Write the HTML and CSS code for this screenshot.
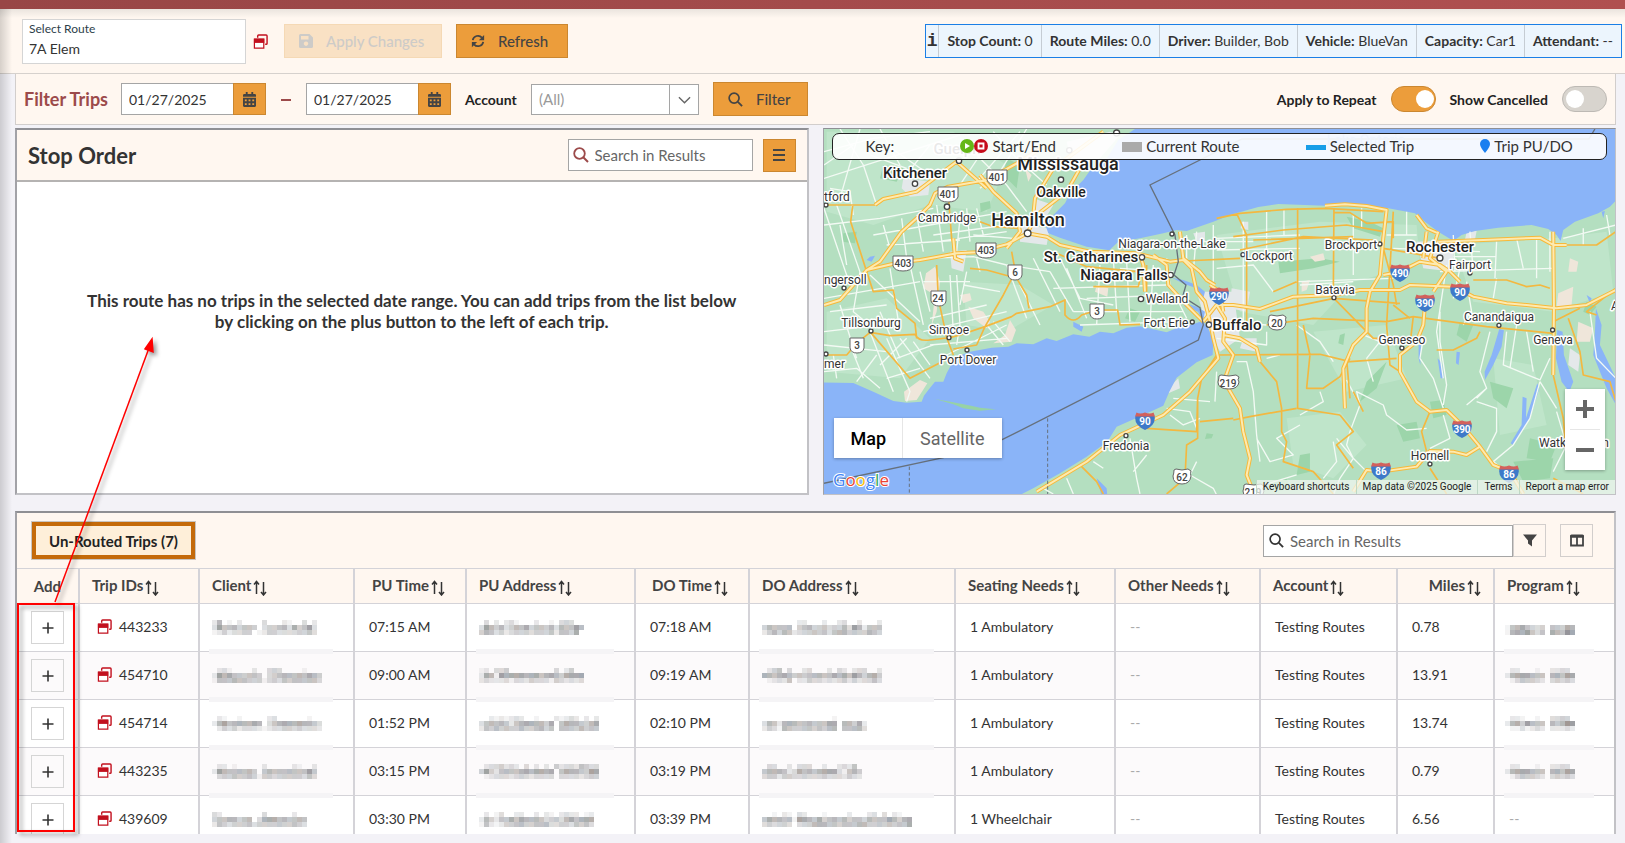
FILE: index.html
```html
<!DOCTYPE html>
<html lang="en">
<head>
   <meta charset="utf-8">
   <title>Route Trips</title>
   <link rel="stylesheet" href="styles.css">
   <script src="mosaic.js" defer></script>
</head>
<body>
   <svg class="defs" width="0" height="0" aria-hidden="true">
      <symbol id="i-copy" viewBox="0 0 16 16"><path d="M5 4V2Q5 1 6 1H14Q15 1 15 2V10Q15 11 14 11H13" fill="none" stroke="currentColor" stroke-width="1.500"/><path d="M1.500 5.500h10v9.500h-10z" fill="#fff" stroke="currentColor" stroke-width="1.300"/><path d="M1 5h11v4.500H1z" fill="currentColor"/></symbol>
      <symbol id="i-save" viewBox="0 0 14 14"><path fill="currentColor" fill-rule="evenodd" d="M1.500 0H10.500L14 3.500V12.500Q14 14 12.500 14H1.500Q0 14 0 12.500V1.500Q0 0 1.500 0zM2 2V5.500H9.500V2zM7 7.500a2.200 2.200 0 1 0 .01 0z"/></symbol>
      <symbol id="i-refresh" viewBox="0 0 16 16"><path d="M2 7A6 6 0 0 1 12.500 4.200M14 9A6 6 0 0 1 3.500 11.800" fill="none" stroke="currentColor" stroke-width="2"/><path d="M15 1V7H9zM1 15V9H7z" fill="currentColor"/></symbol>
      <symbol id="i-cal" viewBox="0 0 14 16"><path fill="currentColor" fill-rule="evenodd" d="M3 0H5V2H9V0H11V2H13L14 3V5H0V3L1 2H3zM0 6H14V15L13 16H1L0 15zM2 8V10H4V8zM6 8V10H8V8zM10 8V10H12V8zM2 12V14H4V12zM6 12V14H8V12zM10 12V14H12V12z"/></symbol>
      <symbol id="i-search" viewBox="0 0 16 16"><path d="M10.500 10.500L15 15" stroke="currentColor" stroke-width="2"/><circle cx="6.500" cy="6.500" r="5.300" fill="none" stroke="currentColor" stroke-width="1.800"/></symbol>
      <symbol id="i-sort" viewBox="0 0 14 16"><path d="M3.500 14V2M1 4.500L3.500 1.500L6 4.500M10.500 2V15M8 12L10.500 15L13 12" fill="none" stroke="currentColor" stroke-width="1.500"/></symbol>
      <symbol id="i-plus" viewBox="0 0 12 12"><path d="M6 .5V11.500M.5 6H11.500" stroke="currentColor" stroke-width="1.600"/></symbol>
      <symbol id="interstate" viewBox="-11 -9 22 18"><path d="M-9.500-5Q-11.500 4 0 9Q11.500 4 9.500-5z" fill="#3d79c9"/><path d="M-10-4.500L-8.500-8.500Q-5-6.500 0-8.500Q5-6.500 8.500-8.500L10-4.500z" fill="#d3605c"/></symbol>
   </svg>

   <div class="topbar"></div>

   <header class="header">
      <div class="route">
         <label for="route">Select Route</label>
         <input id="route" type="text" value="7A Elem">
      </div>
      <a class="copy" href="#" aria-label="Open route"><svg><use href="#i-copy"/></svg></a>
      <button class="btn wide" disabled><svg class="ic"><use href="#i-save"/></svg>Apply Changes</button>
      <button class="btn refresh"><svg class="ic"><use href="#i-refresh"/></svg>Refresh</button>
      <ul class="info">
         <li class="i">i</li>
         <li><b>Stop Count:</b> 0</li>
         <li><b>Route Miles:</b> 0.0</li>
         <li><b>Driver:</b> Builder, Bob</li>
         <li><b>Vehicle:</b> BlueVan</li>
         <li><b>Capacity:</b> Car1</li>
         <li><b>Attendant:</b> --</li>
      </ul>
   </header>

   <main>
      <form class="filter" onsubmit="return false">
         <h2>Filter Trips</h2>
         <div class="date">
            <input type="text" value="01/27/2025" aria-label="From date"><button type="button" aria-label="Pick from date"><svg><use href="#i-cal"/></svg></button>
         </div>
         <span class="dash"></span>
         <div class="date">
            <input type="text" value="01/27/2025" aria-label="To date"><button type="button" aria-label="Pick to date"><svg><use href="#i-cal"/></svg></button>
         </div>
         <label class="account" for="account">Account</label>
         <div class="select">
            <select id="account"><option>(All)</option></select>
            <svg viewBox="0 0 14 8"><path d="M1 1L7 7L13 1" fill="none" stroke="#666" stroke-width="1.500"/></svg>
         </div>
         <button class="btn go"><svg class="ic"><use href="#i-search"/></svg>Filter</button>
         <label class="toggle first">Apply to Repeat <input type="checkbox" checked></label>
         <label class="toggle">Show Cancelled <input type="checkbox"></label>
      </form>

      <div class="panels">
         <section class="panel stops">
            <div class="head">
               <h1>Stop Order</h1>
               <div class="search"><svg><use href="#i-search"/></svg><input type="text" placeholder="Search in Results" aria-label="Search stops"></div>
               <button class="menu" aria-label="Menu"><svg viewBox="0 0 12 12"><path d="M0 1H12M0 6H12M0 11H12" stroke="#444" stroke-width="1.800"/></svg></button>
            </div>
            <p>This route has no trips in the selected date range. You can add trips from the list below<br>by clicking on the plus button to the left of each trip.</p>
         </section>

         <section class="panel map">
            <svg class="canvas" viewBox="0 0 792 365" preserveAspectRatio="xMinYMin slice">
               <g transform="translate(-4 -4) scale(.3333)">
                  <path d="M0 0H2400V1120H0z" fill="#b4dfc0"/>
                  <!-- farmland and forest -->
                  <g fill="#bfe5ca">
                     <path d="M20 20L400 20L560 120L500 260L330 240L160 300L20 260zM20 560L200 520L330 640L240 760L20 740zM430 470L600 480L700 540L560 620L440 600z"/>
                     <path d="M1190 330L1500 290L1790 300L1800 420L1600 470L1480 600L1260 560zM1900 360L2200 340L2360 320L2380 500L2200 560L1960 530zM1480 620L1700 600L1760 760L1580 800z"/>
                     <path d="M1400 880L1560 860L1640 960L1540 1060L1420 1020zM2020 700L2140 720L2180 900L2040 930z"/>
                  </g>
                  <g fill="#9cd5aa">
                     <path d="M190 120L250 130L230 170L180 160zM560 100L600 120L590 190L550 150zM480 235L510 228L512 250L482 262zM70 325L110 320L105 355L66 350zM930 550L960 560L945 590L915 580zM1160 925L1180 928L1175 940L1155 942z"/>
                     <path d="M1375 410L1500 400L1560 410L1480 430L1380 445zM1580 275L1650 290L1690 310L1680 335L1600 310zM1700 710L1670 790L1620 830L1640 770zM1920 590L1960 600L1940 650L1910 630zM2010 770L2080 790L2060 850L2020 820zM2130 940L2210 960L2190 1010L2120 1000zM1350 1070L1400 1060L1410 1090L1370 1100zM1560 630L1575 625L1570 660L1555 655zM2080 1010L2200 1000L2190 1060L2110 1070z"/>
                     <path d="M1440 990L1470 985L1470 1040L1430 1050zM1830 830L1870 825L1880 870L1840 880zM1730 900L1790 890L1800 940L1750 950zM2300 530L2330 545L2310 570L2290 560z"/>
                  </g>
                  <g fill="#efe6da">
                     <path d="M318 445L345 425L360 470L350 560L335 600L345 510L310 490zM300 765L322 775L290 825L255 828L252 800zM420 510L450 505L455 525L430 535zM445 545L490 560L510 590L500 610L460 580zM570 585L588 615L575 650L520 655L555 630zM830 480L865 490L862 515L825 500zM615 130L635 150L625 170z"/>
                     <path d="M1470 395L1510 385L1515 405L1485 410zM1445 470L1470 465L1460 495L1445 500zM2250 400L2275 410L2270 440L2245 440zM2215 505L2260 485L2255 540L2210 545zM2275 590L2320 610L2310 650L2270 650z"/>
                  </g>
                  <g fill="#e4e8ea">
                     <path d="M250 160L330 170L325 210L270 215L245 190zM600 300L690 310L680 360L600 350zM640 220L700 240L670 290L640 280zM740 50L870 20L900 30L840 100L760 130zM390 380L440 375L430 440L395 430zM1130 500L1240 500L1260 640L1200 680L1160 600zM1235 490L1290 500L1280 560L1230 550zM1790 350L1900 345L1900 440L1810 430zM1265 290L1285 290L1285 315L1262 310zM1120 325L1155 320L1155 350L1130 350zM1270 640L1310 640L1310 680L1260 670zM1045 790L1075 760L1080 790L1045 805zM2250 670L2280 690L2275 740L2245 720zM1940 320L1970 318L1965 345L1935 345z"/>
                  </g>
                  <!-- lakes -->
                  <g fill="#8ab4f8">
                     <path d="M945 12L895 45L862 98L815 130L790 165L750 205L735 235L695 275L676 300L685 325L720 338L800 365L868 376L895 350L960 340L1030 325L1070 315L1100 318L1180 290L1240 267L1315 246L1375 237L1515 242L1585 243L1705 250L1785 265L1815 290L1855 320L1885 338L1900 348L1925 330L1965 318L2035 308L2135 300L2185 312L2210 330L2222 348L2230 315L2265 290L2335 265L2370 245L2400 215V0H960z"/>
                     <path d="M0 772L100 774L160 800L220 828L260 833L305 830L312 812L325 795L345 770L370 770L380 745L392 722L410 695L450 680L515 668L565 665L590 655L640 658L680 640L710 648L760 628L808 635L840 620L880 625L920 608L960 604L1010 615L1040 622L1080 605L1110 600L1148 588L1165 610L1180 650L1178 690L1130 712L1100 735L1070 758L1048 800L1030 842L970 870L890 905L862 950L800 995L720 1045L640 1090L590 1115H0z"/>
                     <path d="M1055 458L1090 465L1130 480L1155 500L1150 520L1130 490L1095 478zM1085 530L1130 545L1155 560L1148 590L1135 560L1095 545z"/>
                     <path d="M2038 612L2052 616L2045 665L2020 720L1995 765L1994 740L2015 690zM2212 615L2228 620L2232 690L2260 770L2248 800L2225 770L2208 700zM2328 550L2345 600L2340 660L2388 760V840L2360 790L2320 690L2325 620zM2152 775L2158 790L2130 880L2080 960L2072 955L2105 900L2108 815L2120 820L2118 880zM1796 650L1803 655L1801 720L1796 700zM1853 700L1866 715L1872 760L1862 760zM1910 680L1920 682L1916 720L1908 715z"/>
                     <path d="M830 1060L860 1090L862 1112H845zM760 590L790 605L785 620L760 605zM150 395L165 392L155 410L140 405zM2345 260L2355 258L2350 280zM2300 510L2315 520L2310 535z"/>
                  </g>
                  <path d="M345 822Q420 835 480 848L528 853L480 857L430 850L400 838z" fill="#97d2a5"/>
                  <!-- local roads -->
                  <g class="minor">
                     <path d="M12 80L160 40L330 20M12 160L200 100L420 30M60 12L130 120L170 240M180 12L240 120M12 300L180 280L340 250M120 12L60 220M200 60L330 150M330 60L250 160M440 60L560 180L620 260M520 20L590 100L680 180M420 180L500 60M470 170L600 20M620 12L540 140L480 190M12 120L100 60M150 90L260 130"/>
                     <path d="M12 250L90 480M50 240L130 470M100 270L90 200L30 190M60 300L80 420M160 330L330 300L560 260M190 300L210 370M245 280L260 400M290 270L310 380M350 240L370 380M340 330L560 300M350 350L560 320M200 360L420 345M420 280L410 380M440 250L450 350M470 250L490 330M460 330L580 340M120 440L100 560L160 610M12 520L300 470M30 560L200 540M210 430L240 620M270 420L310 600M150 450L300 590M300 440L330 560M12 620L180 600M60 540L110 700M180 560L240 700M12 660L200 680M12 740L110 730L180 790M40 690L50 760M90 660L130 760M150 620L220 800M200 640L270 800L260 830M240 640L330 760M280 650L330 720M230 700L340 660M180 720L260 640M110 770L170 690M200 760L300 730"/>
                     <path d="M320 400L460 395L560 420L690 440M310 470L450 470M390 450L400 620M410 450L420 600L410 660M440 440L420 540M470 400L480 440M430 480L540 500M310 620L560 560M330 580L500 540M330 660L560 640M500 600L550 660M520 590L570 650M380 690L560 600M600 480L660 600M640 400L720 560M690 440L760 560M720 400L780 520L880 540M560 420L620 580M740 430L800 580M840 420L830 600M880 400L890 560L1000 560M920 410L930 590M700 490L1040 480M760 560L1090 560M800 520L1050 510M780 600L1080 590M1040 400L1050 480L1100 580M900 430L1060 440M1000 420L990 600"/>
                     <path d="M1100 330V420M1130 320L1120 440M1180 300V470M1100 350H1300M1340 260V370M1392 255V330M1190 375L1440 370M1190 430L1300 420L1360 500M1270 290V600M1190 590L1340 600M1340 620V660L1190 640M1430 600L1500 650L1540 710M1430 470L1720 460M1440 480L1600 470M1600 270V450M1625 250V310M1760 260V330M1700 330H1790M1720 370L1980 380M1190 340L1440 330"/>
                     <path d="M1900 330L1905 440M1950 320L1960 440M2030 350L2025 460M2090 340L2110 430M2150 340V460M2190 320V440M1900 395H2030M1860 440L2200 430M1940 470L1960 590M1880 420L1850 620L1870 760M1920 430L1900 520M2030 460L2020 520M2360 270L2370 330M2290 310V360M2230 340L2388 300"/>
                     <path d="M1860 560V650L1880 780L1870 840M1930 600L1950 560M1810 640L1800 700L1840 760L1870 850M2010 620L1980 740L2000 790L1970 820M2060 620L2050 720L2160 765L2190 700M2090 600L2070 730M2160 770L2210 850M2160 770L2130 880L2080 960L2020 1010L2080 1060M2000 790L1940 840M1970 830L2030 850L2030 920L2000 980M2210 860L2240 960L2200 1040M2120 620L2140 740M2330 700L2388 760M2310 560L2330 700"/>
                     <path d="M1250 710H1280L1300 800L1310 930L1320 1010M1310 940L1350 1010L1420 990L1370 940L1440 900M1340 700L1380 690M1580 765L1620 840L1610 800L1690 840L1700 870L1760 915L1820 910M1620 840L1590 920L1580 960L1600 1000M1640 700L1660 770M1630 630L1680 650L1640 700M1870 870L1890 940L1830 970M1550 940L1600 1000L1640 1040M1500 800L1510 830L1440 870M1430 1050L1330 1080M1600 1000L1560 1060L1540 1110M1540 950L1550 1010L1510 1060M1170 830L1060 820M1040 850L1110 860L1130 910M1050 870L1090 900L1140 880M1185 830L1190 740M930 940L950 1060L960 1107M850 1030L820 1010M980 990L940 1040M1130 1010L1110 1050L1180 1090L1190 1110M740 1060L760 1107M670 1090L700 1107"/>
                  </g>
                  <!-- state and county roads -->
                  <g class="road">
                     <path d="M12 240H170L190 225M98 243L92 290L140 440L160 500L220 495L230 550L285 595L290 640M12 690H80L110 655L150 622L210 632L285 628Q295 650 330 645L390 638L420 630L495 605L575 575L590 565L690 545L735 525V570Q760 600 785 570L832 555H893L900 600L960 598M150 620L270 760L395 695M350 420L355 520L380 638L400 690M586 440L550 510L495 605L470 660L400 672M450 430L500 435L590 460L620 510L627 550"/>
                     <path d="M586 440L575 380M385 210L395 340L410 400M480 290L520 305L600 310M700 380L800 425L950 440M820 485H955L970 420M980 420V500M1092 408L1260 400M1190 280L1260 265L1400 253L1515 250L1690 260M1250 265L1280 330V600M1240 335L1390 315L1580 300L1690 320M1300 345L1600 335M1260 375L1450 335L1660 345"/>
                     <path d="M1433 250V850L1560 870M1542 250L1540 520M1542 263H1590L1640 295L1720 290V340M1720 260L1700 600L1710 720L1740 740M1690 370L1780 385L1860 400M1340 600L1480 580L1700 590L1780 575L1890 590L2000 605L2200 625M1542 520L1660 640H1690M1430 470L1360 500M1350 560L1542 520L1740 535M1720 540L1770 580M1780 575L1770 660M1690 370L1720 480L1730 540M1190 690L1500 688L1590 710L1730 700M1320 710L1370 770L1385 850M1450 600L1470 690L1460 790L1510 790L1560 755L1590 700M1240 885L1290 875L1430 850M1385 850V920L1400 950L1390 1010L1480 1040L1540 1107M1560 870L1600 920L1550 960L1600 1030M1600 800L1630 860M1590 820L1580 700M1850 675H1900L1970 640L1980 620"/>
                     <path d="M1960 465L2060 465L2120 485L2160 480L2190 490M2245 580L2280 680L2290 750L2370 770L2388 830M2388 490L2300 560L2330 570M2200 750L2230 880L2240 1000M2200 1060L2290 1107M2280 550L2200 590M2240 360H2330L2388 320M980 910L1130 920L1133 820L1145 760L1190 690M1133 820V940L1100 960L1095 1060L1040 1107M1140 890L1240 880M785 1025L830 1070L850 1107M1830 1030L1880 1107M1830 860L1805 920L1820 980L1800 1020"/>
                  </g>
                  <g class="hw-out">
                     <path id="h1" d="M12 540L60 525L140 435L240 412L300 405L410 385L470 382L560 358L622 325L680 335L720 360L810 380L950 385L1050 410L1090 405L1115 430L1130 500L1155 530L1170 590L1180 640L1195 700L1110 800L1030 870L900 930L800 1010L650 1100M140 435L180 410L245 320L290 280L330 240L345 205L385 185L500 165L600 110L680 60M165 240L190 222L290 200L330 170L410 110M480 150L520 200L590 265L600 320L560 370M640 270L645 220L700 130L850 20M622 325L650 270L740 200L780 130M400 340L405 400L430 410M410 110L500 190M1000 390L1040 420L1045 480L1100 540L1150 590M960 390L970 420L975 500M1150 590L1190 540L1240 540L1320 552L1420 515L1545 510L1620 495L1740 495L1770 480L1900 485L1960 515L2060 535L2120 540L2210 550L2300 540L2388 495"/>
                     <path id="h2" d="M1515 242L1575 238L1640 243L1700 255L1690 340L1680 450L1650 500L1640 550L1640 620L1600 660L1570 730L1575 850M1690 450L1740 440L1800 410L1860 420L1890 440L1920 470M1790 270L1820 310L1855 325M1820 320L1810 400M1855 320L1830 400L1880 440L1840 500M1815 540L1810 600L1790 650L1740 690L1740 740L1790 830L1830 860L1880 855L1926 900L1980 965L2020 1020L2070 1040L2110 1107M1980 965L1940 990L1900 980L1830 978L1790 1025L1684 1040L1640 1035L1600 1100M2200 320L2202 550L2200 750M1190 540L1215 580L1210 650L1240 690L1215 760L1225 790L1260 850L1270 920L1290 1000L1280 1050L1300 1100M1210 630L1260 640L1310 670L1320 710M1080 320L1090 400L1140 440L1160 465L1185 480M1170 480L1200 500L1210 560M1855 350L1990 345L2160 338L2200 360L2240 360"/>
                  </g>
                  <g class="hw-in"><use href="#h1"/><use href="#h2"/></g>
                  <!-- borders -->
                  <g fill="none" stroke="#66707c" stroke-width="4">
                     <path d="M2325 12L2307 42H1266L1140 105L990 180L1065 330L1075 410L1062 450L1098 480L1088 515L1140 548L1150 600L1135 645L545 945L370 998L12 1075" />
                     <path d="M683 880V1107M268 1025V1107" stroke-dasharray="10 7" stroke-width="3"/>
                  </g>
                  <g class="towns">
                     <circle cx="285" cy="176" r="8"/><circle cx="381" cy="245" r="8"/><circle cx="723" cy="164" r="8"/><circle cx="623" cy="325" r="10"/><circle cx="1056" cy="327" r="6"/><circle cx="966" cy="397" r="8"/><circle cx="1052" cy="450" r="8"/><circle cx="963" cy="522" r="8"/><circle cx="1117" cy="591" r="6"/><circle cx="1167" cy="599" r="8"/><circle cx="153" cy="618" r="6"/><circle cx="387" cy="638" r="6"/><circle cx="441" cy="675" r="6"/><circle cx="18" cy="240" r="6"/><circle cx="72" cy="489" r="6"/><circle cx="18" cy="687" r="6"/><circle cx="918" cy="932" r="6"/><circle cx="417" cy="107" r="8"/><circle cx="890" cy="24" r="9"/><circle cx="748" cy="76" r="8"/>
                     <circle cx="1269" cy="389" r="6"/><circle cx="1680" cy="357" r="6"/><circle cx="1860" cy="399" r="9"/><circle cx="1950" cy="444" r="6"/><circle cx="1542" cy="518" r="6"/><circle cx="1746" cy="669" r="6"/><circle cx="2037" cy="601" r="6"/><circle cx="2198" cy="615" r="6"/><circle cx="1830" cy="1017" r="6"/>
                  </g>
               </g>
               <!-- route shields -->
               <g class="ont">
                  <path d="M163 41h20v10q-2 5-10 5t-10-5zM114 58h20v10q-2 5-10 5t-10-5zM152 114h20v10q-2 5-10 5t-10-5zM69 127h20v10q-2 5-10 5t-10-5zM184 136h14v10q-1 5-7 5t-7-5zM107 162h15v10q-1 5-7 5t-8-5zM266 175h14v10q-1 5-7 5t-7-5zM26 209h14v10q-1 5-7 5t-7-5z"/>
                  <path d="M350 341l2-1 6 1 6-1 3 2q-1 3 0 5-1 8-9 8-9 0-9-8 1-3 1-6zM395 247l2-1 8 1 7-1 3 2q-2 3 0 5-1 7-10 7-11 0-11-7 1-3 1-6zM445 187l2-1 6 1 6-1 3 2q-1 3 0 5-1 8-9 8-9 0-9-8 1-3 1-6zM420 356l2-1 8 1 7-1 3 2q-2 3 0 5-1 7-10 7-11 0-11-7 1-3 1-6z"/>
               </g>
               <g class="num">
                  <text x="173" y="52">401</text><text x="124" y="69">401</text><text x="162" y="125">403</text><text x="79" y="138">403</text><text x="191" y="147">6</text><text x="114" y="173">24</text><text x="273" y="186">3</text><text x="33" y="220">3</text>
                  <text x="358" y="352">62</text><text x="404" y="258">219</text><text x="453" y="198">20</text><text x="429" y="367">219</text>
               </g>
               <use href="#interstate" x="384" y="158" width="22" height="18"/><use href="#interstate" x="310" y="283" width="22" height="18"/><use href="#interstate" x="565" y="135" width="22" height="18"/><use href="#interstate" x="625" y="154" width="22" height="18"/><use href="#interstate" x="590" y="165" width="22" height="18"/><use href="#interstate" x="627" y="291" width="22" height="18"/><use href="#interstate" x="546" y="333" width="22" height="18"/><use href="#interstate" x="674" y="336" width="22" height="18"/>
               <g class="num us">
                  <text x="395" y="171">290</text><text x="321" y="296">90</text><text x="576" y="148">490</text><text x="636" y="167">90</text><text x="601" y="178">390</text><text x="638" y="304">390</text><text x="557" y="346">86</text><text x="685" y="349">86</text>
               </g>
               <g class="places">
                  <text class="city" x="91" y="49">Kitchener</text>
                  <text class="city" x="133" y="25">Guelph</text>
                  <text class="big" x="244" y="41">Mississauga</text>
                  <text class="city light" x="237" y="68">Oakville</text>
                  <text class="big" x="204" y="97">Hamilton</text>
                  <text class="city" x="267" y="133">St. Catharines</text>
                  <text class="city" x="300" y="151">Niagara Falls</text>
                  <text class="city" x="413" y="201">Buffalo</text>
                  <text class="city" x="616" y="123">Rochester</text>
                  <text x="123" y="93">Cambridge</text>
                  <text x="348" y="119">Niagara-on-the-Lake</text>
                  <text x="343" y="174">Welland</text>
                  <text x="342" y="198">Fort Erie</text>
                  <text x="47" y="198">Tillsonburg</text>
                  <text x="125" y="205">Simcoe</text>
                  <text x="144" y="235">Port Dover</text>
                  <text x="302" y="321">Fredonia</text>
                  <text class="cut" x="0" y="72">tford</text>
                  <text class="cut" x="0" y="155">ngersoll</text>
                  <text class="cut" x="0" y="239">mer</text>
                  <text x="445" y="131">Lockport</text>
                  <text x="527" y="120">Brockport</text>
                  <text x="646" y="140">Fairport</text>
                  <text x="511" y="165">Batavia</text>
                  <text x="578" y="215">Geneseo</text>
                  <text x="675" y="192">Canandaigua</text>
                  <text x="729" y="215">Geneva</text>
                  <text x="606" y="331">Hornell</text>
                  <text class="cut" x="715" y="318">Watkins Glen</text>
                  <text class="cut" x="787" y="181">A</text>
               </g>
               <text class="lake" x="542" y="16">Lake Ontario</text>
               <text class="google" x="9" y="357"><tspan fill="#4285f4">G</tspan><tspan fill="#ea4335">o</tspan><tspan fill="#fbbc05">o</tspan><tspan fill="#4285f4">g</tspan><tspan fill="#34a853">l</tspan><tspan fill="#ea4335">e</tspan></text>
            </svg>
            <ul class="key">
               <li>Key:</li>
               <li>
                  <svg width="28" height="14" viewBox="0 0 28 14"><circle cx="7" cy="7" r="7" fill="#65b717"/><path d="M5 4L10 7L5 10z" fill="#fff"/><circle cx="21" cy="7" r="7" fill="#c60c1b"/><path d="M18.500 4.500h5v5h-5z" fill="none" stroke="#fff" stroke-width="1.800"/></svg>
                  Start/End
               </li>
               <li><span class="bar current"></span>Current Route</li>
               <li><span class="bar selected"></span>Selected Trip</li>
               <li><svg width="10" height="14" viewBox="0 0 10 14"><path d="M5 0a5 5 0 0 1 5 5Q10 8 5 14Q0 8 0 5A5 5 0 0 1 5 0z" fill="#1a7ff0"/></svg>Trip PU/DO</li>
            </ul>
            <div class="maptype"><button class="on">Map</button><button>Satellite</button></div>
            <div class="zoom">
               <button aria-label="Zoom in"><svg viewBox="0 0 18 18"><path d="M9 0V18M0 9H18" stroke="#666" stroke-width="4"/></svg></button>
               <button aria-label="Zoom out"><svg viewBox="0 0 18 18"><path d="M0 9H18" stroke="#666" stroke-width="4"/></svg></button>
            </div>
            <div class="credits"><a href="#">Keyboard shortcuts</a><span>Map data ©2025 Google</span><a href="#">Terms</a><a href="#">Report a map error</a></div>
         </section>
      </div>

      <section class="panel trips">
         <div class="bar-top">
            <button class="tab">Un-Routed Trips (7)</button>
            <div class="search"><svg><use href="#i-search"/></svg><input type="text" placeholder="Search in Results" aria-label="Search trips"></div>
            <button class="tool funnel" aria-label="Filter"><svg viewBox="0 0 14 12"><path d="M0 0H14L9 6V12L5 9V6z" fill="#444"/></svg></button>
            <button class="tool" aria-label="Columns"><svg viewBox="0 0 14 12"><path d="M1 2H13V11H1zM7 2V11" fill="none" stroke="#444" stroke-width="1.800"/><path d="M0 1.500Q0 0 1.500 0H12.500Q14 0 14 1.500V3H0z" fill="#444"/></svg></button>
         </div>
         <table>
            <colgroup><col class="c-add"><col class="c-id"><col class="c-client"><col class="c-pu"><col class="c-pua"><col class="c-do"><col class="c-doa"><col class="c-seat"><col class="c-other"><col class="c-acct"><col class="c-miles"><col class="c-prog"></colgroup>
            <thead>
               <tr>
                  <th class="mid">Add</th>
                  <th>Trip IDs<svg><use href="#i-sort"/></svg></th>
                  <th>Client<svg><use href="#i-sort"/></svg></th>
                  <th class="right">PU Time<svg><use href="#i-sort"/></svg></th>
                  <th>PU Address<svg><use href="#i-sort"/></svg></th>
                  <th class="right">DO Time<svg><use href="#i-sort"/></svg></th>
                  <th>DO Address<svg><use href="#i-sort"/></svg></th>
                  <th>Seating Needs<svg><use href="#i-sort"/></svg></th>
                  <th>Other Needs<svg><use href="#i-sort"/></svg></th>
                  <th>Account<svg><use href="#i-sort"/></svg></th>
                  <th class="right miles">Miles<svg><use href="#i-sort"/></svg></th>
                  <th>Program<svg><use href="#i-sort"/></svg></th>
               </tr>
            </thead>
            <tbody>
               <tr>
                  <td class="mid"><button class="add" aria-label="Add trip"><svg><use href="#i-plus"/></svg></button></td>
                  <td><a class="copy" href="#" aria-label="Open trip"><svg><use href="#i-copy"/></svg></a>443233</td>
                  <td data-mosaic="260102000030002100302|385564554034456374583|124233440124433334453"></td>
                  <td>07:15 AM</td>
                  <td data-mosaic="030202310002001034300|386463465745546365586|465342344434445255470"></td>
                  <td>07:18 AM</td>
                  <td data-mosaic="000000022000200230020002|465556045644534463862555|246465234454535664544654"></td>
                  <td>1 Ambulatory</td><td class="none">--</td><td>Testing Routes</td><td>0.78</td>
                  <td data-mosaic="00000000000000|15675434055476|16778535076598"></td>
               </tr>
               <tr>
                  <td class="mid"><button class="add" aria-label="Add trip"><svg><use href="#i-plus"/></svg></button></td>
                  <td><a class="copy" href="#" aria-label="Open trip"><svg><use href="#i-copy"/></svg></a>454710</td>
                  <td data-mosaic="0231000020034300001000|2867554554034566565764|1555655444134354555553"></td>
                  <td>09:00 AM</td>
                  <td data-mosaic="120334000000000302400|276187777677567647778|232223133243331432323"></td>
                  <td>09:19 AM</td>
                  <td data-mosaic="024503002300020320233002|765676454566557675864674|012325022433232342423353"></td>
                  <td>1 Ambulatory</td><td class="none">--</td><td>Testing Routes</td><td>13.91</td>
                  <td data-mosaic="02200010022330|26777655067587|01354432034343"></td>
               </tr>
               <tr>
                  <td class="mid"><button class="add" aria-label="Add trip"><svg><use href="#i-plus"/></svg></button></td>
                  <td><a class="copy" href="#" aria-label="Open trip"><svg><use href="#i-copy"/></svg></a>454714</td>
                  <td data-mosaic="0210010000023000000100|2685676676035677676653|0243423332123344343332"></td>
                  <td>01:52 PM</td>
                  <td data-mosaic="002121232001000212320202|356565256776647057665467|254645446445645055546455"></td>
                  <td>02:10 PM</td>
                  <td data-mosaic="000000000000001000000|365267655655577066472|243165445545466055663"></td>
                  <td>1 Ambulatory</td><td class="none">--</td><td>Testing Routes</td><td>13.74</td>
                  <td data-mosaic="02210010033440|26748655065698|01131232022232"></td>
               </tr>
               <tr>
                  <td class="mid"><button class="add" aria-label="Add trip"><svg><use href="#i-plus"/></svg></button></td>
                  <td><a class="copy" href="#" aria-label="Open trip"><svg><use href="#i-copy"/></svg></a>443235</td>
                  <td data-mosaic="022010000020000021002|286556564056555655585|034454454144344444353"></td>
                  <td>03:15 PM</td>
                  <td data-mosaic="023342320302020423325433|484256556767767057665487|012333234323333033332344"></td>
                  <td>03:19 PM</td>
                  <td data-mosaic="03300203330020023250|56665237565677731564|34424433433343332432"></td>
                  <td>1 Ambulatory</td><td class="none">--</td><td>Testing Routes</td><td>0.79</td>
                  <td data-mosaic="02200010022330|26777655067587|01354432034343"></td>
               </tr>
               <tr>
                  <td class="mid"><button class="add" aria-label="Add trip"><svg><use href="#i-plus"/></svg></button></td>
                  <td><a class="copy" href="#" aria-label="Open trip"><svg><use href="#i-copy"/></svg></a>439609</td>
                  <td data-mosaic="3200000000300000200|4556645603777565565|2543444534444544543"></td>
                  <td>03:30 PM</td>
                  <td data-mosaic="02013002200202102322012|26425575766653453675777|15212445644556334435453"></td>
                  <td>03:39 PM</td>
                  <td data-mosaic="001021032000100002000230302100|576656187657456564554655586467|343443034466655455566445454557"></td>
                  <td>1 Wheelchair</td><td class="none">--</td><td>Testing Routes</td><td>6.56</td><td class="none">--</td>
               </tr>
            </tbody>
         </table>
      </section>
   </main>

   <svg class="callout" aria-hidden="true">
      <rect x="18" y="604" width="56" height="227"/>
      <path d="M55 602L149 348"/>
      <path class="tip" d="M152 339L145 349L153 352z"/>
   </svg>
</body>
</html>
```
FILE: styles.css
```css
* {
   box-sizing:border-box;
}
body {
   margin:0;
   height:100vh;
   display:flex;
   flex-direction:column;
   overflow:hidden;
   position:relative;
   font-family:Lato,sans-serif;
   font-size:15px;
   color:#333;
   background-color:#f3f2f7;
}
body:before {
   content:"";
   position:absolute;
   top:9px;
   left:0;
   bottom:0;
   width:12px;
   background:linear-gradient(to right,rgba(0,0,0,.16),rgba(0,0,0,0));
   z-index:2;
}
button, input, select {
   font:inherit;
   color:inherit;
   margin:0;
}
button {
   cursor:pointer;
}
h1, h2, ul, p {
   margin:0;
   padding:0;
}
ul {
   list-style:none;
}
a {
   color:inherit;
   text-decoration:none;
}
.defs {
   position:absolute;
}
.topbar {
   height:9px;
   flex:none;
   background:linear-gradient(to right,#984646,#b05050);
}

/* header */
.header {
   display:flex;
   align-items:center;
   flex:none;
   height:65px;
   padding:0 3px 0 22px;
   border-bottom:1px solid #d6d1cd;
   background:linear-gradient(#eae4de,#fff7f0 9px);
}
.route {
   width:224px;
   height:45px;
   padding:0 6px;
   border:1px solid #d5d5d5;
   background:#fff;
}
.route label {
   display:block;
   font-size:12px;
   line-height:18px;
   color:#2d3e4a;
}
.route input {
   display:block;
   width:100%;
   height:22px;
   padding:0;
   border:0;
   font-size:14px;
   background:none;
}
.copy svg {
   display:block;
   width:15px;
   height:15px;
   color:#c2101e;
}
.header .copy {
   margin:0 16px 0 7px;
}
.btn {
   display:flex;
   align-items:center;
   height:34px;
   padding:0 0 0 14px;
   border:1px solid #cb8730;
   background:#ec9d3b;
   color:#444;
   font-weight:500;
   white-space:nowrap;
}
.btn .ic {
   width:14px;
   height:14px;
   margin-right:13px;
}
.btn.wide {
   width:158px;
   color:#cdcbc8;
   border-color:#f5d9b5;
   background:#f9e1c4;
}
.btn.refresh {
   width:112px;
   margin-left:14px;
}
.btn.go {
   width:95px;
   margin-left:14px;
}
.btn.go .ic {
   width:15px;
   height:15px;
}
.info {
   display:flex;
   height:34px;
   margin-left:auto;
   font-size:14px;
   line-height:32px;
   border:1px solid #1b7fe6;
   background:#ecf5fd;
}
.info li {
   padding:0 8px;
   white-space:nowrap;
   border-left:1px solid #c5ccd3;
}
.info .i {
   padding:0 1px;
   border:0;
   font:bold 18px/32px "Liberation Mono",monospace;
}

/* filter row */
main {
   display:flex;
   flex-direction:column;
   flex:1;
   min-height:0;
   padding:0 9px 9px 15px;
}
.filter {
   display:flex;
   align-items:center;
   flex:none;
   height:51px;
   padding:0 8px;
   border:1px solid #d2cecc;
   border-top:0;
   background:#fff7f0;
}
.filter h2 {
   width:97px;
   font-size:18px;
   white-space:nowrap;
   color:#9c4a4a;
}
.date {
   display:flex;
   height:32px;
}
.date input {
   width:112px;
   padding:0 7px;
   border:1px solid #a5a5a5;
   border-right:0;
   font-size:14px;
   background:#fff;
}
.date button {
   width:33px;
   padding:0;
   border:1px solid #cb8730;
   background:#ec9d3b;
}
.date svg {
   display:block;
   width:13px;
   height:15px;
   margin:0 auto;
   color:#444;
}
.dash {
   width:10px;
   height:2px;
   margin:2px 15px 0;
   background:#9c4a4a;
}
.account {
   width:66px;
   padding-left:14px;
   font-size:14px;
   font-weight:bold;
   color:#222;
}
.select {
   position:relative;
   margin-left:14px;
}
.select select {
   display:block;
   appearance:none;
   width:168px;
   height:31px;
   padding:0 7px;
   border:1px solid #a5a5a5;
   border-radius:0;
   color:#999;
   background:linear-gradient(#a5a5a5,#a5a5a5) right 28px top 0/1px 100% no-repeat #fff;
}
.select svg {
   position:absolute;
   top:12px;
   right:8px;
   width:13px;
   height:8px;
}
.toggle {
   display:flex;
   align-items:center;
   gap:14px;
   margin-left:14px;
   font-size:14px;
   font-weight:bold;
   color:#222;
}
.toggle.first {
   margin-left:auto;
}
.toggle input {
   appearance:none;
   display:flex;
   align-items:center;
   width:45px;
   height:26px;
   padding:0 3px;
   border:1px solid #bdb9b4;
   border-radius:13px;
   background:#d8d4ce;
}
.toggle input:before {
   content:"";
   width:18px;
   height:18px;
   border-radius:9px;
   background:#fff;
}
.toggle input:checked {
   justify-content:flex-end;
   padding:0 1px;
   border-color:#cb8730;
   background:#ec9d3b;
}

/* panels */
.panels {
   display:grid;
   grid-template-columns:1fr 1fr;
   gap:14px;
   flex:none;
   height:367px;
   margin-top:3px;
}
.panel {
   border:2px solid;
   border-color:#8f8f94 #c2c2c6 #c2c2c6 #a2a2a7;
   background:#fff;
}
.head {
   display:flex;
   align-items:center;
   height:52px;
   padding:0 11px;
   border-bottom:2px solid #b5b3b2;
   background:#fff7f0;
}
.head h1 {
   flex:1;
   font-size:22px;
}
.search {
   display:flex;
   align-items:center;
   width:185px;
   height:32px;
   border:1px solid #a5a5a5;
   background:#fff;
}
.search svg {
   flex:none;
   width:16px;
   height:16px;
   margin-left:4px;
   color:#9c4a4a;
}
.search input {
   width:100%;
   height:28px;
   padding:0 6px;
   border:0;
   background:none;
}
.search input::placeholder {
   color:#666;
   opacity:1;
}
.menu {
   width:33px;
   height:33px;
   margin-left:10px;
   padding:0;
   border:1px solid #cb8730;
   background:#ec9d3b;
}
.menu svg {
   width:12px;
   height:12px;
}
.stops p {
   padding-top:108px;
   font-size:17px;
   line-height:21px;
   font-weight:bold;
   text-align:center;
}

/* map */
.map {
   position:relative;
   overflow:hidden;
   border-width:1px;
   font-family:Roboto,sans-serif;
}
.canvas {
   display:block;
   width:100%;
   height:100%;
}
.minor, .road, .hw-out, .hw-in {
   fill:none;
   stroke-linejoin:round;
}
.minor {
   stroke:#f3faf4;
   stroke-width:4;
}
.road {
   stroke:#f3b840;
   stroke-width:5;
}
.hw-out {
   stroke:#f7b93a;
   stroke-width:12;
}
.hw-in {
   stroke:#fdeab0;
   stroke-width:6;
}
.towns circle {
   fill:#fff;
   stroke:#444;
   stroke-width:4;
}
.ont path {
   fill:#fff;
   stroke:#666;
}
.num {
   font-size:10px;
   font-weight:500;
   fill:#444;
   text-anchor:middle;
}
.us {
   font-weight:bold;
   fill:#fff;
}
.places text {
   font-size:12px;
   fill:#333;
   text-anchor:middle;
   stroke:#fff;
   stroke-width:3px;
   stroke-linejoin:round;
   paint-order:stroke;
}
.places .city {
   font-size:15px;
   font-weight:500;
   fill:#222;
}
.places .light {
   font-size:14px;
}
.places .big {
   font-size:18px;
   font-weight:500;
   fill:#222;
}
.places .cut {
   text-anchor:start;
}
.lake {
   font-size:14px;
   text-anchor:middle;
   fill:#4a80e8;
}
.google {
   font:500 17px "Open Sans",sans-serif;
   stroke:#fff;
   stroke-width:2px;
   paint-order:stroke;
}
.key {
   position:absolute;
   top:4px;
   left:8px;
   right:8px;
   height:27px;
   padding-bottom:2px;
   display:flex;
   justify-content:space-around;
   align-items:center;
   border:1px solid #222;
   border-radius:7px;
   font-family:Lato,sans-serif;
   background:rgba(255,255,255,.9);
}
.key li {
   display:flex;
   align-items:center;
   gap:4px;
}
.bar {
   width:20px;
   height:10px;
   margin-top:3px;
   background:#aaa;
}
.bar.selected {
   height:5px;
   margin-top:4px;
   background:#179ee8;
}
.maptype {
   position:absolute;
   left:10px;
   bottom:36px;
   display:flex;
   height:40px;
   box-shadow:0 1px 3px rgba(0,0,0,.3);
}
.maptype button {
   padding:0 17px;
   border:0;
   font-size:18px;
   color:#666;
   background:#fff;
}
.maptype .on {
   padding-right:16px;
   border-right:1px solid #e6e6e6;
   font-weight:500;
   color:#000;
}
.zoom {
   position:absolute;
   right:10px;
   bottom:24px;
   width:40px;
   padding:0 5px;
   background:#fff;
   box-shadow:0 1px 3px rgba(0,0,0,.3);
}
.zoom button {
   display:flex;
   align-items:center;
   justify-content:center;
   width:30px;
   height:40px;
   padding:0;
   border:0;
   background:none;
}
.zoom button + button {
   height:41px;
   border-top:1px solid #e6e6e6;
}
.zoom svg {
   width:18px;
   height:18px;
}
.credits {
   position:absolute;
   right:0;
   bottom:0;
   display:flex;
   font-size:10px;
   line-height:14px;
   color:#222;
}
.credits > * {
   padding:0 6px;
   background:rgba(240,245,240,.75);
   border-left:1px solid rgba(180,210,190,.8);
}

/* trips */
.trips {
   flex:1;
   min-height:0;
   margin-top:16px;
   overflow:hidden;
   border-bottom:0;
}
.bar-top {
   display:flex;
   align-items:center;
   height:55px;
   padding:0 21px 0 15px;
   background:#fff7f0;
}
.tab {
   height:37px;
   margin-right:auto;
   padding:0 13px;
   border:4px solid #c46a0a;
   outline:1px solid #c8c4c0;
   font-weight:bold;
   color:#222;
   background:#feefd9;
}
.trips .search {
   width:250px;
}
.trips .search svg {
   width:15px;
   height:15px;
   margin-left:5px;
   color:#333;
}
.tool {
   width:33px;
   height:33px;
   padding:0;
   border:1px solid #d2cecc;
   background:none;
}
.tool.funnel {
   margin-right:14px;
}
.tool svg {
   width:14px;
   height:13px;
}
table {
   width:100%;
   table-layout:fixed;
   border-collapse:separate;
   border-spacing:0;
}
.c-add { width:63px; }
.c-id { width:120px; }
.c-client { width:155px; }
.c-pu { width:112px; }
.c-pua { width:169px; }
.c-do { width:114px; }
.c-seat { width:160px; }
.c-other { width:145px; }
.c-acct { width:137px; }
.c-miles { width:97px; }
.c-prog { width:119px; }
th, td {
   border-right:2px solid #d4d3d8;
   border-bottom:1px solid #d4d3d8;
   text-align:left;
   white-space:nowrap;
}
th:last-child, td:last-child {
   border-right:0;
}
th {
   height:36px;
   padding:0 12px;
   border-top:1px solid #d4d3d8;
   color:#444;
   background:#fff7f0;
}
th svg {
   width:14px;
   height:16px;
   margin-left:2px;
   vertical-align:-5px;
   color:#333;
}
th.right {
   padding-right:20px;
   text-align:right;
}
th.miles {
   padding-right:12px;
}
td {
   position:relative;
   height:48px;
   padding:0 14px 2px;
   font-size:14px;
}
tr:nth-child(even) td {
   background:#fcfafb;
}
td .copy {
   display:inline-block;
   vertical-align:-2px;
   margin:0 7px 0 3px;
}
.mid {
   padding:0 14px;
   text-align:center;
}
.add {
   display:block;
   width:33px;
   height:33px;
   padding:0;
   border:1px solid #d5d5d5;
   background:none;
}
.add svg {
   display:block;
   width:12px;
   height:12px;
   margin:0 auto;
}
.none {
   color:#aaa;
}
td[data-mosaic] {
   padding:0 12px;
}
td[data-mosaic]:last-child {
   padding:0 10px;
}
td[data-mosaic]:after {
   content:"";
   position:absolute;
   left:9px;
   right:20px;
   bottom:-3px;
   height:5px;
   background:#f5f4f6;
   z-index:1;
}
.mosaic {
   display:block;
   height:15px;
}

.callout {
   position:absolute;
   top:0;
   left:0;
   width:200px;
   height:840px;
   fill:none;
   stroke:#f00;
   stroke-width:2;
   filter:drop-shadow(3px 3px 2px rgba(0,0,0,.4));
   pointer-events:none;
   z-index:3;
}
.callout path {
   stroke-width:1.5;
}
.callout .tip {
   fill:#f00;
}
```
FILE: mosaic.js
```js
// blocks out private cells: one digit per 5px block, 0 is empty, 9 is darkest
var tints = ['#85878c', '#8c95a0', '#978d88', '#8a888f', '#888d8c'];

document.querySelectorAll('td[data-mosaic]').forEach(function(td) {
   var rows = td.dataset.mosaic.split('|');
   var w = rows[0].length * 5;
   var s = '<svg class="mosaic" width="' + w + '" height="15" shape-rendering="crispEdges">';
   rows.forEach(function(row, y) {
      for (var x = 0; x < row.length; x++) {
         if (row[x] == '0') continue;
         s += '<rect x="' + x * 5 + '" y="' + y * 5 + '" width="5" height="5" fill="'
            + tints[(x * 3 + y) % 5] + '" opacity="' + row[x] / 10 + '"/>';
      }
   });
   td.innerHTML = s + '</svg>';
});
```
